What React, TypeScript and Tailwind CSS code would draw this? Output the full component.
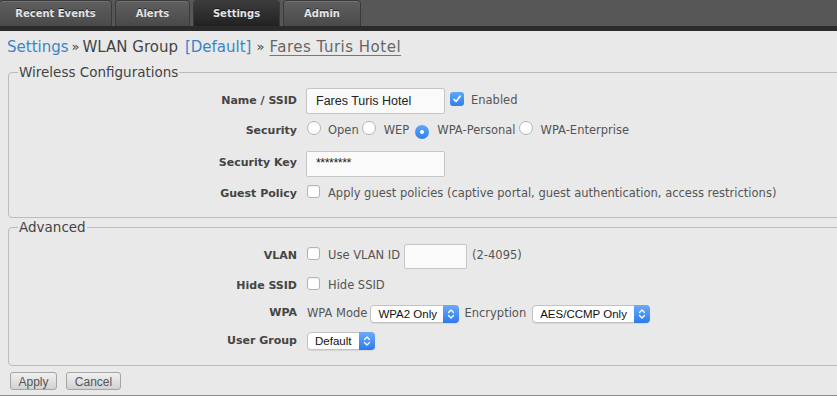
import React from 'react';

const Tab: React.FC<{ label: string; active?: boolean; className: string }> = ({ label, active, className }) => (
  <div
    className={`flex h-[26px] items-center justify-center rounded-t-[4px] border border-b-0 border-[#3a3a3a] text-[10px] font-bold text-[#e4e4e4] [text-shadow:0_-1px_0_rgba(0,0,0,0.6)] ${
      active
        ? 'bg-gradient-to-b from-[#3c3c3c] to-[#222222]'
        : 'bg-gradient-to-b from-[#5f5f5f] to-[#4a4a4a] shadow-[inset_0_1px_0_rgba(255,255,255,0.12)]'
    } ${className}`}
  >
    {label}
  </div>
);

const Check: React.FC<{ checked?: boolean }> = ({ checked }) =>
  checked ? (
    <span className="inline-flex h-[14px] w-[14px] shrink-0 items-center justify-center rounded-[3px] bg-gradient-to-b from-[#5ea6f8] to-[#2f80ee]">
      <svg width="10" height="10" viewBox="0 0 10 10">
        <path d="M2 5.3 L4.1 7.4 L8 2.2" fill="none" stroke="white" strokeWidth="1.7" strokeLinecap="round" strokeLinejoin="round" />
      </svg>
    </span>
  ) : (
    <span className="inline-block h-[13px] w-[13px] shrink-0 rounded-[3px] border border-[#b3b3b3] bg-white shadow-[inset_0_1px_1px_rgba(0,0,0,0.06)]" />
  );

const Radio: React.FC<{ checked?: boolean }> = ({ checked }) =>
  checked ? (
    <span className="inline-flex h-[14px] w-[14px] shrink-0 items-center justify-center rounded-full bg-gradient-to-b from-[#5ea6f8] to-[#2f80ee]">
      <span className="h-[4px] w-[4px] rounded-full bg-white" />
    </span>
  ) : (
    <span className="inline-block h-[14px] w-[14px] shrink-0 rounded-full border border-[#b3b3b3] bg-white" />
  );

const Select: React.FC<{ value: string; className: string }> = ({ value, className }) => (
  <div className={`flex h-[18px] items-stretch rounded-[4px] border border-[#c2c2c2] bg-white shadow-[0_1px_1px_rgba(0,0,0,0.08)] ${className}`}>
    <span className="flex-1 pl-[7px] font-['Liberation_Sans',Arial,sans-serif] text-[11.5px] leading-[16px] text-[#111]">{value}</span>
    <span className="-my-px -mr-px flex w-[16px] items-center justify-center rounded-r-[4px] bg-gradient-to-b from-[#6caaf7] to-[#2a7aee]">
      <svg width="8" height="12" viewBox="0 0 8 12">
        <path d="M1.5 4.5 L4 2 L6.5 4.5 M1.5 7.5 L4 10 L6.5 7.5" fill="none" stroke="white" strokeWidth="1.3" strokeLinecap="round" strokeLinejoin="round" />
      </svg>
    </span>
  </div>
);

const Row: React.FC<{ label: string; h: string; children: React.ReactNode }> = ({ label, h, children }) => (
  <div className={`flex items-center ${h}`}>
    <div className="w-[279px] text-right text-[11px] font-bold text-[#444]">{label}</div>
    <div className="ml-[9px] flex items-center text-[11.5px] text-[#555]">{children}</div>
  </div>
);

const TextBox: React.FC<{ value?: string; className: string }> = ({ value, className }) => (
  <div className={`flex items-center rounded-[2px] border border-[#c6c6c6] bg-[#fafafa] pl-[9px] font-['Liberation_Sans',Arial,sans-serif] text-[12.5px] text-[#222] ${className}`}>
    {value}
  </div>
);

export default function App() {
  return (
    <div className="h-[396px] w-[837px] overflow-hidden bg-[#e9e9e9] font-['DejaVu_Sans',sans-serif]">
      <div className="flex h-[26px] items-end gap-[3px] bg-[#575757]">
        <Tab label="Recent Events" className="-ml-px w-[113px]" />
        <Tab label="Alerts" className="w-[75px]" />
        <Tab label="Settings" active className="w-[87px]" />
        <Tab label="Admin" className="w-[78px]" />
      </div>
      <div className="h-[5px] bg-[#2b2b2b]" />

      <div className="flex h-[32px] items-center pl-[7px] text-[15px]">
        <span className="text-[#3b84c6]">Settings</span>
        <span className="mx-[3px] text-[13px] text-[#444]">»</span>
        <span className="text-[#444]">WLAN Group</span>
        <span className="ml-[7px] text-[#3b84c6]">[Default]</span>
        <span className="mx-[5px] text-[13px] text-[#444]">»</span>
        <span className="tracking-[0.5px] text-[#666] underline decoration-[#777] underline-offset-[3px]">Fares Turis Hotel</span>
      </div>

      <fieldset className="ml-[8px] w-[850px] rounded-[4px] border border-[#bcbcbc] pb-[10px] pl-[9px]">
        <legend className="px-[1px] text-[13.5px] leading-[18px] text-[#444]">Wireless Configurations</legend>
        <div className="pt-[5px]">
          <Row label="Name / SSID" h="h-[30px]">
            <TextBox value="Fares Turis Hotel" className="h-[26px] w-[139px]" />
            <span className="ml-[5px]"><Check checked /></span>
            <span className="ml-[7px]">Enabled</span>
          </Row>
          <Row label="Security" h="h-[30px]">
            <span className="ml-px"><Radio /></span>
            <span className="ml-[7px]">Open</span>
            <span className="ml-[3px]"><Radio /></span>
            <span className="ml-[8px]">WEP</span>
            <span className="ml-[6px]"><Radio checked /></span>
            <span className="ml-[8px]">WPA-Personal</span>
            <span className="ml-[3px]"><Radio /></span>
            <span className="ml-[8px]">WPA-Enterprise</span>
          </Row>
          <Row label="Security Key" h="h-[35px]">
            <TextBox value="********" className="h-[26px] w-[139px] text-[10px] tracking-[-0.5px]" />
          </Row>
          <Row label="Guest Policy" h="h-[26px]">
            <span className="ml-px"><Check /></span>
            <span className="ml-[8px]">Apply guest policies (captive portal, guest authentication, access restrictions)</span>
          </Row>
        </div>
      </fieldset>

      <fieldset className="ml-[8px] w-[850px] rounded-[4px] border border-[#bcbcbc] pb-[9px] pl-[9px]">
        <legend className="px-[1px] text-[13.5px] leading-[18px] text-[#444]">Advanced</legend>
        <div className="pt-[5px]">
          <Row label="VLAN" h="h-[30px]">
            <span className="ml-px"><Check /></span>
            <span className="ml-[8px]">Use VLAN ID</span>
            <TextBox className="ml-[4px] h-[25px] w-[63px]" />
            <span className="ml-[5px]">(2-4095)</span>
          </Row>
          <Row label="Hide SSID" h="h-[30px]">
            <span className="ml-px"><Check /></span>
            <span className="ml-[8px]">Hide SSID</span>
          </Row>
          <Row label="WPA" h="h-[25px]">
            <span className="ml-px">WPA Mode</span>
            <Select value="WPA2 Only" className="ml-[3px] w-[89px]" />
            <span className="ml-[5px]">Encryption</span>
            <Select value="AES/CCMP Only" className="ml-[6px] w-[118px]" />
          </Row>
          <Row label="User Group" h="h-[30px]">
            <Select value="Default" className="ml-px w-[68px]" />
          </Row>
        </div>
      </fieldset>

      <div className="flex gap-[9px] pl-[10px] pt-[6px]">
        <button className="h-[18px] w-[47px] rounded-[3px] border border-[#a5a5a5] bg-gradient-to-b from-[#f0f0f0] to-[#d2d2d2] font-['Liberation_Sans',Arial,sans-serif] text-[12px] text-[#555]">Apply</button>
        <button className="h-[18px] w-[55px] rounded-[3px] border border-[#a5a5a5] bg-gradient-to-b from-[#f0f0f0] to-[#d2d2d2] font-['Liberation_Sans',Arial,sans-serif] text-[12px] text-[#555]">Cancel</button>
      </div>
      <div className="mt-[5px] h-[2px] bg-[#8a8a8a]" />
    </div>
  );
}
